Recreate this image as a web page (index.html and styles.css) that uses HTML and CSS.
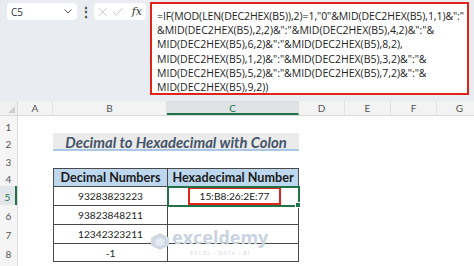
FILE: index.html
```html
<!DOCTYPE html>
<html lang="en">
<head>
  <meta charset="UTF-8" />
  <meta name="viewport" content="width=device-width, initial-scale=1.0" />
  <title>Decimal to Hexadecimal with Colon</title>
  <link rel="stylesheet" href="styles.css">
</head>
<body>

  <div class="topbar">
    <div class="namebox">
      <span>C5</span>
      <svg width="8" height="5" viewBox="0 0 8 5"><path d="M0.5 0.5 L4 4 L7.5 0.5" fill="none" stroke="#555" stroke-width="1"/></svg>
    </div>
    <div class="dots">⋮</div>
    <div class="fxbox">
      <svg width="10" height="10" viewBox="0 0 10 10"><path d="M1 1 L9 9 M9 1 L1 9" stroke="#c4c4c4" stroke-width="1"/></svg>
      <svg width="12" height="10" viewBox="0 0 12 10"><path d="M1 5 L4.5 8.5 L11 1" fill="none" stroke="#c4c4c4" stroke-width="1"/></svg>
      <span class="fx">fx</span>
    </div>
    <div class="formula">
      <div class="first">=IF(MOD(LEN(DEC2HEX(B5)),2)=1,"0"&amp;MID(DEC2HEX(B5),1,1)&amp;":"</div>
      <div>&amp;MID(DEC2HEX(B5),2,2)&amp;":"&amp;MID(DEC2HEX(B5),4,2)&amp;":"&amp;</div>
      <div>MID(DEC2HEX(B5),6,2)&amp;":"&amp;MID(DEC2HEX(B5),8,2),</div>
      <div>MID(DEC2HEX(B5),1,2)&amp;":"&amp;MID(DEC2HEX(B5),3,2)&amp;":"&amp;</div>
      <div>MID(DEC2HEX(B5),5,2)&amp;":"&amp;MID(DEC2HEX(B5),7,2)&amp;":"&amp;</div>
      <div>MID(DEC2HEX(B5),9,2))</div>
    </div>
  </div>

  <div class="sheet">
    <div class="corner"><span class="tri"></span></div>
    <div class="colheads">
      <div class="ch col-a">A</div>
      <div class="ch col-b">B</div>
      <div class="ch col-c active">C</div>
      <div class="ch col-n">D</div>
      <div class="ch col-n">E</div>
      <div class="ch col-n">F</div>
      <div class="ch col-n">G</div>
    </div>
    <div class="rowheads">
      <div class="rh r17">1</div>
      <div class="rh r18">2</div>
      <div class="rh r17">3</div>
      <div class="rh r18">4</div>
      <div class="rh r19 active">5</div>
      <div class="rh r19">6</div>
      <div class="rh r19">7</div>
      <div class="rh r18">8</div>
      <div class="rh r18"></div>
    </div>
    <div class="cells">
      <div class="title">Decimal to Hexadecimal with Colon</div>
      <table class="data">
        <tr class="hrow"><th>Decimal Numbers</th><th>Hexadecimal Number</th></tr>
        <tr class="tall"><td>93283823223</td><td class="sel"><span class="result">15:B8:26:2E:77</span><i class="handle"></i></td></tr>
        <tr class="tall"><td>93823848211</td><td></td></tr>
        <tr class="tall"><td>12342323211</td><td></td></tr>
        <tr><td>-1</td><td></td></tr>
      </table>
      <div class="watermark">
        <svg width="18" height="17" viewBox="0 0 16 15"><path d="M8 0 L16 4 L16 11 L8 15 L0 11 L0 4 Z" fill="#cfd8e3"/><path d="M4 6 L8 4 L12 6 L12 10 L8 12 L4 10 Z" fill="#e4eaf1"/></svg>
        <div class="wm-text">
          <span class="wm-name">exceldemy</span>
          <span class="wm-sub">EXCEL · DATA · BI</span>
        </div>
      </div>
    </div>
  </div>

</body>
</html>
```

FILE: styles.css
```css
body {
  margin: 0;
  width: 474px;
  height: 266px;
  overflow: hidden;
  background-color: #fff;
  font-family: Lato, "Open Sans", sans-serif;
}

.topbar {
  display: flex;
  align-items: flex-start;
  height: 101px;
  padding: 2px 5px 0 7px;
  box-sizing: border-box;
  background-color: #e9edf1;
}

.namebox {
  display: flex;
  align-items: center;
  justify-content: space-between;
  width: 70px;
  height: 17px;
  margin-top: 1px;
  padding: 0 5px 0 4px;
  box-sizing: border-box;
  background-color: #fff;
  border-radius: 4px;
  font-family: "Open Sans", sans-serif;
  font-size: 10px;
  color: #333;
}

.dots {
  width: 17px;
  margin-top: 2px;
  text-align: center;
  font-size: 12px;
  font-weight: bold;
  color: #444;
}

.fxbox {
  display: flex;
  align-items: center;
  gap: 5px;
  width: 52px;
  height: 17px;
  margin-top: 1px;
  padding: 0 4px 0 4px;
  box-sizing: border-box;
  background-color: #fff;
  border-radius: 4px;
}

.fx {
  margin-left: 3px;
  font-family: "DejaVu Serif", serif;
  font-style: italic;
  font-size: 11px;
  color: #333;
}

.formula {
  width: 319px;
  height: 93px;
  margin-left: 4px;
  padding: 5px 0 0 5px;
  box-sizing: border-box;
  background-color: #fff;
  border: 2px solid #e2231a;
  font-family: "Open Sans", sans-serif;
  font-size: 10.5px;
  line-height: 14.2px;
  color: #222;
  white-space: nowrap;
  overflow: hidden;
}

.formula .first {
  letter-spacing: -0.08px;
}

.sheet {
  display: grid;
  grid-template-columns: 18px 1fr;
  grid-template-rows: 15px 1fr;
  font-family: Lato, "Open Sans", sans-serif;
}

.corner {
  position: relative;
  background-color: #f0f0f0;
  border-right: 1px solid #d9d9d9;
  border-bottom: 1px solid #d9d9d9;
}

.tri {
  position: absolute;
  right: 2px;
  bottom: 2px;
  width: 0;
  height: 0;
  border-left: 7px solid transparent;
  border-bottom: 7px solid #cfcfcf;
}

.colheads {
  display: flex;
  background-color: #f3f3f3;
  border-bottom: 1px solid #d9d9d9;
}

.ch {
  flex: none;
  box-sizing: border-box;
  border-right: 1px solid #e0e0e0;
  text-align: center;
  font-size: 10px;
  line-height: 14px;
  color: #555;
}

.col-a { width: 35px; }
.col-b { width: 114px; }
.col-c { width: 132px; }
.col-n { width: 46px; }

.ch.active {
  background-color: #dfe3e6;
  border-bottom: 2px solid #217346;
  color: #217346;
}

.rowheads {
  display: flex;
  flex-direction: column;
  background-color: #f5f5f5;
  border-right: 1px solid #d9d9d9;
}

.rh {
  box-sizing: border-box;
  padding-top: 5px;
  text-align: center;
  font-size: 10px;
  color: #555;
}

.r17 { height: 17px; }
.r18 { height: 18px; }
.r19 { height: 19px; }

.rh.active {
  background-color: #e4e7ea;
  border-right: 2px solid #217346;
  color: #217346;
}

.cells {
  position: relative;
  display: grid;
  grid-template-columns: 35px 114px 132px;
  grid-template-rows: 17px 18px 17px 93px;
}

.title {
  grid-column: 2 / 4;
  grid-row: 2;
  background-color: #ebebeb;
  border-bottom: 2px solid #a9c8e6;
  text-align: center;
  font-size: 14.8px;
  font-weight: bold;
  font-style: italic;
  line-height: 18px;
  color: #44546a;
}

.data {
  grid-column: 2 / 4;
  grid-row: 4;
  border-collapse: collapse;
  table-layout: fixed;
  width: 246px;
}

.data th,
.data td {
  padding: 0;
  height: 17px;
  border: 1px solid #4a4a4a;
  text-align: center;
  font-size: 10.2px;
  color: #222;
}

.data tr.tall td {
  height: 18px;
}

.data th {
  background-color: #bdd7ee;
  font-size: 12.6px;
  font-weight: bold;
  color: #1a1a1a;
}

.data th:first-child { width: 113px; }

.data td.sel {
  position: relative;
  outline: 2px solid #217346;
  outline-offset: -1px;
}

.result {
  display: block;
  margin: 0 17px 0 20px;
  border: 2px solid #e2231a;
  line-height: 14px;
}

.handle {
  position: absolute;
  right: -3px;
  bottom: -3px;
  width: 4px;
  height: 4px;
  background-color: #217346;
  border: 1px solid #fff;
}

.watermark {
  position: absolute;
  left: 133px;
  top: 109px;
  display: flex;
  align-items: center;
  gap: 3px;
}

.wm-text {
  display: flex;
  flex-direction: column;
  align-items: center;
}

.wm-name {
  font-family: "Open Sans", sans-serif;
  font-size: 18px;
  font-weight: bold;
  line-height: 25px;
  color: #cad4df;
}

.wm-sub {
  font-size: 5.5px;
  line-height: 7px;
  letter-spacing: 1px;
  color: #d3dbe4;
}
```
